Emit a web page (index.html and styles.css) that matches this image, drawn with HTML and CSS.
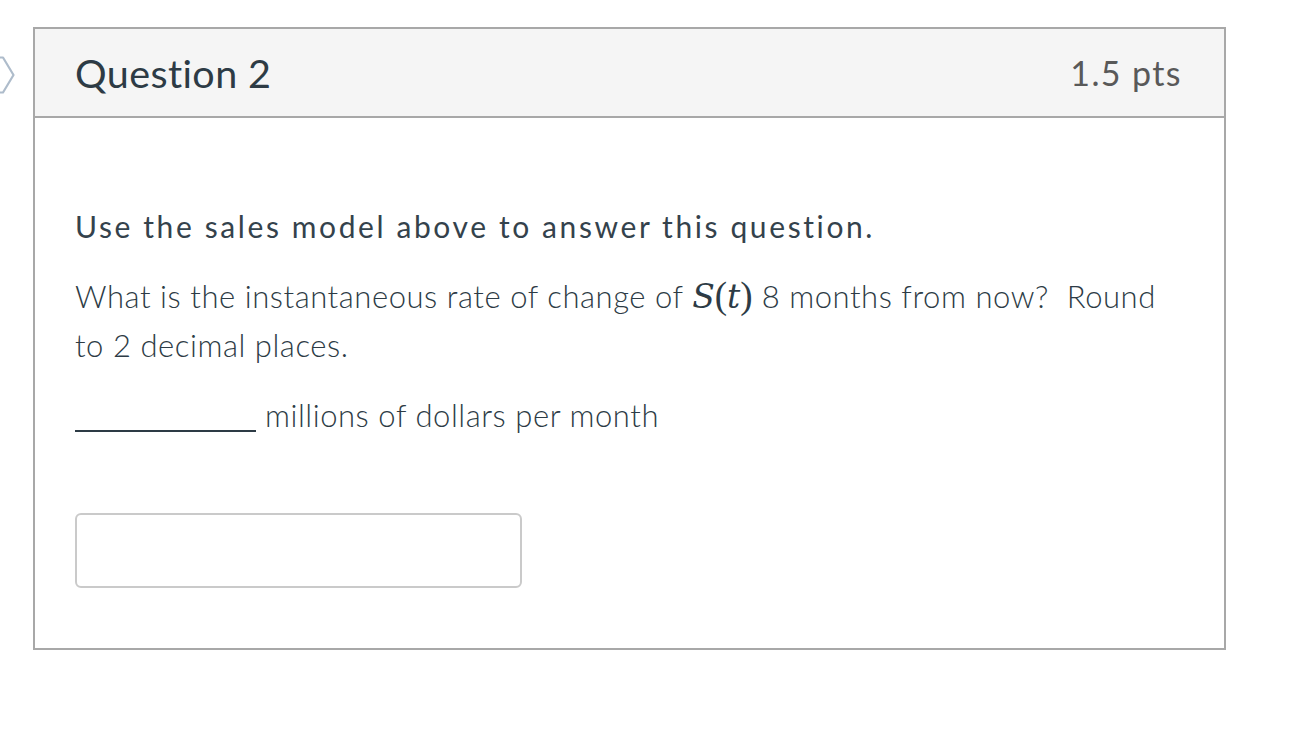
FILE: index.html
```html
<!DOCTYPE html>
<html lang="en">
<head>
<meta charset="utf-8">
<title>Question 2</title>
<link rel="stylesheet" href="styles.css">
</head>
<body>
<div class="page">
  <div class="flag-col">
    <svg class="flag" width="33" height="40" viewBox="0 0 33 40" aria-hidden="true">
      <path d="M-10 2.5 H3 L13.5 20 L3 37.5 H-10" fill="none" stroke="#aebccb" stroke-width="2.2" stroke-linejoin="round"/>
    </svg>
  </div>
  <div class="card">
    <div class="card-header">
      <h2 class="title">Question 2</h2>
      <span class="pts">1.5 pts</span>
    </div>
    <div class="card-body">
      <p class="lead">Use the sales model above to answer this question.</p>
      <p class="text">What is the instantaneous rate of change of <span class="math"><i>S</i>(<i>t</i>)</span> 8 months from now?&nbsp; Round to 2 decimal places.</p>
      <p class="text blank-line"><span class="blank"></span> millions of dollars per month</p>
      <div class="answer"><input class="answer-input" type="text" aria-label="Answer"></div>
    </div>
  </div>
</div>
</body>
</html>
```

FILE: styles.css
```css
html, body {
  margin: 0;
  padding: 0;
  background: #ffffff;
}

body {
  font-family: Lato, "Noto Sans", sans-serif;
  color: #2d3b45;
}

.page {
  display: flex;
  align-items: flex-start;
  padding-top: 27px;
}

.flag-col {
  width: 33px;
  flex: 0 0 33px;
  padding-top: 28px;
}

.flag {
  display: block;
}

.card {
  width: 1193px;
  box-sizing: border-box;
  border: 2px solid #a8a8a8;
}

.card-header {
  display: flex;
  justify-content: space-between;
  align-items: center;
  height: 89px;
  box-sizing: border-box;
  padding: 0 42px 0 40px;
  background: #f5f5f5;
  border-bottom: 2px solid #a8a8a8;
}

.title {
  margin: 0;
  font-size: 39.5px;
  font-weight: 400;
  color: #2d3b45;
  letter-spacing: 0.4px;
}

.pts {
  font-size: 34px;
  color: #595959;
  letter-spacing: 1.4px;
}

.card-body {
  padding: 88px 40px 60px 40px;
}

.lead {
  margin: 0 0 26px 0;
  font-size: 30px;
  font-weight: 400;
  letter-spacing: 2.6px;
  line-height: 40px;
  color: #34424c;
}

.text {
  margin: 0 0 22px 0;
  font-size: 31px;
  font-weight: 300;
  letter-spacing: 0.55px;
  line-height: 48px;
  color: #2d3b45;
}

.math {
  font-family: "Liberation Serif", "DejaVu Serif", serif;
  font-size: 37px;
  font-weight: 400;
  letter-spacing: 0;
}

.math i {
  font-family: "DejaVu Serif", "Liberation Serif", serif;
  font-size: 33px;
  font-weight: 400;
}

.blank-line {
  margin-bottom: 0;
}

.blank {
  display: inline-block;
  width: 181px;
  height: 0;
  border-bottom: 2px solid #2d3b45;
  vertical-align: -5px;
}

.answer {
  padding-top: 74px;
}

.answer-input {
  display: block;
  width: 447px;
  height: 75px;
  box-sizing: border-box;
  margin: 0;
  border: 2px solid #cacaca;
  border-radius: 6px;
  background: #ffffff;
}
```
